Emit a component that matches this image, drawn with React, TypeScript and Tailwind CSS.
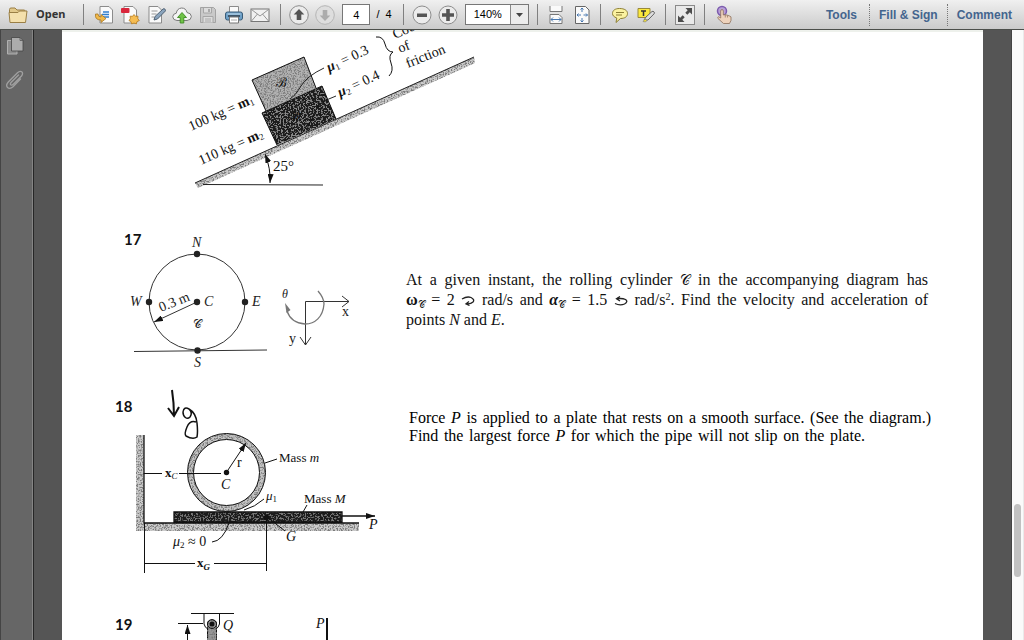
import type { ReactNode } from "react";

const serif = "font-['Liberation_Serif',serif]";

function ToolButton({ label, children }: { label: string; children: ReactNode }) {
  return (
    <button type="button" aria-label={label} className="flex h-6 w-[26px] shrink-0 items-center justify-center">
      <svg width="20" height="20" viewBox="0 0 20 20" fill="none">
        {children}
      </svg>
    </button>
  );
}

function Separator() {
  return <div className="h-[21px] w-px shrink-0 bg-[#808080]" />;
}

function Sheet({ x = 4 }: { x?: number }) {
  return (
    <path
      d={`M${x} 1.5h9l3.500 3.500v13H${x}z`}
      fill="#fafafa"
      stroke="#8b8b8b"
      strokeLinejoin="round"
    />
  );
}

function Toolbar() {
  return (
    <header className="flex h-[30px] shrink-0 items-center overflow-hidden border-b border-[#4c4f4b] bg-linear-to-b from-[#f0f0f0] to-[#cbcbcb] pr-3 pl-2 font-['Liberation_Sans',sans-serif] text-xs text-black">
      <button type="button" className="flex items-center gap-2 font-['Noto_Sans',sans-serif] text-[11px] font-bold text-[#333]">
        <svg width="20" height="18" viewBox="0 0 20 18">
          <path d="M1.500 3.500q0-1.500 1.500-1.500h4l2 2h7q1 0 1 1v3H1.500z" fill="#e2c98b" stroke="#9a7f45" />
          <path d="M2 16.500 1 6.500h9l1.500-1.500H19l-1.500 11.500z" fill="#f4e0ac" stroke="#9a7f45" strokeLinejoin="round" />
        </svg>
        Open
      </button>
      <div className="ml-[18px] flex items-center gap-[7px]">
        <Separator />
        <div className="flex">
          <ToolButton label="Convert to Word">
            <Sheet x={6} />
            <path d="M9 7h6M8 9.500h7M9 12h6" stroke="#2f7fd0" strokeWidth="1.500" />
            <path d="M1.500 9q-1 6 5.500 6v2.500l5-4-5-4v2.500q-3 0-3-3z" fill="#f0b849" stroke="#a87722" strokeWidth=".8" />
          </ToolButton>
          <ToolButton label="Create PDF">
            <Sheet />
            <rect x="1" y="3" width="8.500" height="5" rx="1" fill="#d9263c" />
            <path d="m14 9.500 1.500 1.800 2.500-.1-.2 2.500 1.500 1.900-2.300 1-.6 2.300-2.400-.8-2.400.8-.6-2.300-2-1 1.300-1.900-.2-2.500 2.500.1z" fill="#f6bd52" stroke="#b57a1d" strokeWidth=".8" />
          </ToolButton>
          <ToolButton label="Edit">
            <Sheet x={3} />
            <path d="M5.500 6h6M5.500 9h5M5.500 12h3" stroke="#999" />
            <path d="m8 15 1-3.500 8-7.500q1-.8 2 .2t.2 2L11.500 14z" fill="#8aa4bd" stroke="#47586a" strokeWidth=".9" />
          </ToolButton>
          <ToolButton label="Upload">
            <path d="M5 15.500q-4-.3-4.300-3.700.3-3.200 3.600-3.600Q5 3.500 9.500 3q4.500 0 5.500 4.500 4.200.5 4.400 4-.2 3.700-4.400 4z" fill="#f5f5f5" stroke="#7b7b7b" />
            <path d="M10 7.500 5.500 12.500h2.700v5.500h3.600v-5.500h2.700z" fill="#6fc347" stroke="#3f8a25" strokeWidth=".9" />
          </ToolButton>
          <ToolButton label="Save">
            <path d="M2.500 2.500h13l2 2v13h-15z" fill="#c9c9c9" stroke="#a3a3a3" />
            <path d="M5.500 3v5h8V3M5 17.500v-6h10v6" fill="#dcdcdc" stroke="#a6a6a6" />
            <path d="M11 4v3" stroke="#999" strokeWidth="1.500" />
            <path d="M7 14h6M7 16h6" stroke="#aaa" />
          </ToolButton>
          <ToolButton label="Print">
            <path d="M5.500 1.500h9v7h-9z" fill="#fafafa" stroke="#8b8b8b" />
            <rect x="1.500" y="7" width="17" height="8" rx="2" fill="#6d9fc6" stroke="#3a5c78" />
            <path d="M3.500 9h13" stroke="#c6dff0" />
            <path d="M4 11h12" stroke="#2e3e4c" strokeWidth="1.500" />
            <path d="M5.500 12h9v6h-9z" fill="#fff" stroke="#777" />
            <path d="M7 15h6" stroke="#aaa" />
          </ToolButton>
          <ToolButton label="Email">
            <rect x="1" y="4" width="18" height="12.500" fill="#f1f1f1" stroke="#777" />
            <path d="m1.500 4.500 8.500 6.500 8.500-6.500M1.500 16l6-7M18.500 16l-6-7" stroke="#8c8c8c" strokeWidth=".9" />
          </ToolButton>
        </div>
        <Separator />
      </div>
      <div className="ml-[5px] flex items-center">
        <ToolButton label="Previous page">
          <circle cx="10" cy="10" r="9.300" fill="#ececec" stroke="#8d8d8d" />
          <path d="m10 4-5.300 5.500h3v5.500h4.600V9.500h3z" fill="#555" />
        </ToolButton>
        <ToolButton label="Next page">
          <circle cx="10" cy="10" r="9.300" fill="#dedede" stroke="#b5b5b5" />
          <path d="M10 16 4.700 10.500h3V5h4.600v5.500h3z" fill="#acacac" />
        </ToolButton>
        <input
          aria-label="Page number"
          defaultValue="4"
          className="ml-1 h-[21px] w-7 border border-[#777] bg-white text-center text-[11px]"
        />
        <span className="ml-[6px] text-[11px] whitespace-pre">/  4</span>
      </div>
      <div className="ml-[11px] flex items-center">
        <Separator />
        <div className="ml-[5px] flex">
          <ToolButton label="Zoom out">
            <circle cx="10" cy="10" r="9" fill="#ececec" stroke="#8d8d8d" />
            <path d="M5 8.500h10v3.500H5z" fill="#555" />
          </ToolButton>
          <ToolButton label="Zoom in">
            <circle cx="10" cy="10" r="9" fill="#ececec" stroke="#8d8d8d" />
            <path d="M8.200 4h3.600v4.200H16v3.600h-4.200V16H8.200v-4.200H4V8.200h4.200z" fill="#555" />
          </ToolButton>
        </div>
        <div className="ml-1 grid h-[21px] w-16 border border-[#777] bg-white">
          <select
            aria-label="Zoom level"
            defaultValue="140%"
            className="col-start-1 row-start-1 appearance-none bg-transparent pl-2 text-[11px]"
          >
            <option>100%</option>
            <option>140%</option>
            <option>200%</option>
          </select>
          <span className="pointer-events-none col-start-1 row-start-1 flex w-[18px] items-center justify-center justify-self-end border-l border-[#888] bg-[#ececec]">
            <svg width="7" height="4" viewBox="0 0 7 4">
              <path d="M0 0h7L3.500 4z" fill="#444" />
            </svg>
          </span>
        </div>
      </div>
      <div className="ml-2 flex items-center">
        <Separator />
        <div className="ml-[5px] flex">
          <ToolButton label="Fit width">
            <path d="M4 1v5.500h12V1" fill="#fafafa" stroke="#777" />
            <path d="M4 18.500v-9h9l3 3v6z" fill="#fafafa" stroke="#777" />
            <path d="M5 14.500h10M7 12.500l-2 2 2 2M13 12.500l2 2-2 2" stroke="#4878b0" />
          </ToolButton>
          <ToolButton label="Fit page">
            <path d="M3.500 1.500h10l3.500 3.500v13.500H3.500z" fill="#fafafa" stroke="#666" />
            <path d="M10 3v4M8.500 4.500 10 3l1.500 1.500M10 17v-4M8.500 15.500 10 17l1.500-1.500M5 10h4M6.500 8.500 5 10l1.500 1.500M15.500 10h-4M14 8.500l1.500 1.500-1.500 1.500" stroke="#4878b0" />
          </ToolButton>
        </div>
        <div className="mr-[6px] ml-[5px]">
          <Separator />
        </div>
        <div className="flex">
          <ToolButton label="Comment note">
            <path d="M9.500 3.500c5 0 8 2 8 5s-2.500 5-7 5L6 17.500l.8-4.500C4 12 2.500 10.500 2.500 8.500c0-3 2.500-5 7-5z" fill="#fbf2a0" stroke="#8d7f35" />
            <path d="M6 7.500h8M6 10h6" stroke="#8d7f35" />
          </ToolButton>
          <ToolButton label="Highlight text">
            <path d="M2 3.500h12v9H2z" fill="#fbe83c" stroke="#99893a" />
            <path d="M5 6h5M7.500 6v5" stroke="#333" strokeWidth="1.500" />
            <path d="m8 15 2-3 6-5.500q1-.6 2 .4t0 2L12 15z" fill="#ddd" stroke="#666" />
            <path d="m7 16.500 2-2.500 2 1.500-1.500 1.500z" fill="#f3df3c" stroke="#777" strokeWidth=".6" />
          </ToolButton>
        </div>
        <div className="ml-[6px] flex items-center gap-[6px]">
          <Separator />
          <ToolButton label="Read mode">
            <rect x=".5" y=".5" width="19" height="19" fill="#e9e9e9" stroke="#8a8a8a" />
            <path d="M10.500 3H17v6.500l-2.200-2.200-2.500 2.400-2-2L12.700 5.200zM9.500 17H3v-6.500l2.200 2.200 2.500-2.400 2 2-2.400 2.500z" fill="#4b4b4b" />
          </ToolButton>
          <Separator />
          <ToolButton label="Touch mode">
            <circle cx="8" cy="6" r="4.500" fill="#b9a0d8" stroke="#7c5cae" strokeWidth="1.500" />
            <path d="M6.700 13V6q.1-1.500 1.300-1.500T9.300 6v4l2-.3 2 .5 2 .7 1.700 1v3.500L15.500 18.500h-6L4 13.500q-.8-1.500.6-1.800z" fill="#eed3bc" stroke="#8c6e59" strokeWidth=".8" />
            <path d="M11.300 10v2.500M13.500 10.500v2" stroke="#8c6e59" strokeWidth=".7" />
          </ToolButton>
        </div>
      </div>
      <nav className="ml-auto flex items-center font-bold whitespace-nowrap text-[#44658e]">
        <a href="#tools" className="pr-3">Tools</a>
        <a href="#sign" className="border-x border-dotted border-[#777] px-[9px] leading-[22px]">Fill &amp; Sign</a>
        <a href="#comment" className="pl-[9px]">Comment</a>
      </nav>
    </header>
  );
}

function Sidebar() {
  return (
    <aside className="flex w-[34px] shrink-0 flex-col gap-[14px] border-x border-l-[#444] border-r-[#262626] bg-[#666] pt-[6px] pl-1 shadow-[inset_-1px_0_#858585]">
      <button type="button" aria-label="Page thumbnails" className="self-start">
        <svg width="20" height="20" viewBox="0 0 20 20">
          <path d="M2.500 4.500H12v13.500H2.500z" fill="#8c8c8c" stroke="#b0b0b0" />
          <path d="M6.500 1.500h8.500l3 3v10.500H6.500z" fill="#acacac" stroke="#444" strokeWidth=".8" />
          <path d="M15 1.500v3h3" fill="none" stroke="#555" strokeWidth=".8" />
        </svg>
      </button>
      <button type="button" aria-label="Attachments" className="self-start">
        <svg width="20" height="20" viewBox="0 0 20 20" fill="none" stroke="#a0a0a0" strokeWidth="1.300" strokeLinecap="round">
          <path d="M13.500 5 6 12.500q-1.300 1.800 0 2.500 1.200.5 2.300-.8l8.200-8.200q2-2.700.2-4.200-1.900-1.200-4.200.9L3.300 12q-2.800 3.300-.8 5.500 2.500 2 5.500-.8L15.500 9" />
        </svg>
      </button>
    </aside>
  );
}

function Textures() {
  return (
    <defs>
      <filter id="light-grain" x="0" y="0" width="100%" height="100%">
        <feTurbulence type="fractalNoise" baseFrequency="0.7" numOctaves="2" seed="4" />
        <feColorMatrix values="0 0 0 0 0.200  0 0 0 0 0.200  0 0 0 0 0.200  5 0 0 0 -2.200" />
        <feComposite in2="SourceAlpha" operator="in" result="grain" />
        <feMerge>
          <feMergeNode in="SourceGraphic" />
          <feMergeNode in="grain" />
        </feMerge>
      </filter>
      <filter id="dark-grain" x="0" y="0" width="100%" height="100%">
        <feTurbulence type="fractalNoise" baseFrequency="0.6" numOctaves="2" seed="8" />
        <feColorMatrix values="0 0 0 0 0.010  0 0 0 0 0.010  0 0 0 0 0.010  8 0 0 0 -3.000" />
        <feComposite in2="SourceAlpha" operator="in" result="grain" />
        <feMerge>
          <feMergeNode in="SourceGraphic" />
          <feMergeNode in="grain" />
        </feMerge>
      </filter>
      <marker id="arrow" viewBox="0 0 9 6" refX="9" refY="3" markerWidth="9" markerHeight="6" markerUnits="userSpaceOnUse" orient="auto-start-reverse">
        <path d="M0 0 9 3 0 6z" fill="#111" />
      </marker>
    </defs>
  );
}

function InclineFigure() {
  return (
    <svg width="370" height="175" viewBox="115 30 370 175" fill="#111" fontSize="14" className={serif} role="img" aria-label="Blocks on an incline">
      <Textures />
      <path d="M195 183 474 57l1 6-277 125z" fill="#ccc" filter="url(#light-grain)" />
      <path d="m195 183 279-126M203 184.500l120 .5" stroke="#222" />
      <path d="m252 80 52-23 12 31-50 23z" fill="#b2b2b2" filter="url(#light-grain)" />
      <path d="m262 113 60-27 14 33-59 26z" fill="#888" filter="url(#dark-grain)" />
      <g fill="none" stroke="#111">
        <path d="m252 80 52-23 12 31M252 80l14 31M262 113l60-27 14 33M262 113l15 32" />
        <path d="M324 68q-17 8-23 18-6 10-11 13M336 96q-17 6-21 15-3 10-8 17" strokeWidth=".9" />
        <path d="M376 37q7-1 9 7 2 8 8 8-5 3-2 11 3 8-2 13" />
        <path d="M265 154q6 15 5 29" markerStart="url(#arrow)" markerEnd="url(#arrow)" />
      </g>
      <text x="276" y="87" fontSize="13">ℬ</text>
      <text x="290" y="120" fontSize="12">ℬ</text>
      <text transform="translate(191 131) rotate(-24)">100 kg = <tspan fontWeight="bold">m</tspan><tspan fontSize="9" dy="2">1</tspan></text>
      <text transform="translate(201 165) rotate(-24)">110 kg = <tspan fontWeight="bold">m</tspan><tspan fontSize="9" dy="2">2</tspan></text>
      <text transform="translate(329 72) rotate(-25)"><tspan fontStyle="italic" fontWeight="bold">μ</tspan><tspan fontSize="9" dy="2">1</tspan><tspan dy="-2"> = 0.3</tspan></text>
      <text transform="translate(340 97) rotate(-25)"><tspan fontStyle="italic" fontWeight="bold">μ</tspan><tspan fontSize="9" dy="2">2</tspan><tspan dy="-2"> = 0.4</tspan></text>
      <text transform="translate(395 39) rotate(-24)">Coe</text>
      <text transform="translate(400 53) rotate(-22)">of</text>
      <text transform="translate(408 68) rotate(-22)">friction</text>
      <text x="273" y="171" fontSize="15">25°</text>
    </svg>
  );
}

function CylinderFigure() {
  return (
    <svg width="260" height="145" viewBox="115 230 260 145" fill="#222" fontSize="14" className={`${serif} italic`} role="img" aria-label="Rolling cylinder">
      <g fill="none" stroke="#333">
        <circle cx="197" cy="302" r="48" />
        <path d="m134 351.500 133-1.500" />
        <path d="m197 302-43 20" markerEnd="url(#arrow)" />
        <path d="M305.500 345V301.500H349M342 296l7 5.500-7 5.500M300 337l5.500 8 5.500-8" />
        <path d="M318 291q6 7 6 13c-1 13-9 20-19 20q-14-1-18-13" stroke="#777" strokeWidth="1.300" />
      </g>
      <path d="m285 303 5.500 7-4 3z" fill="#777" />
      <circle cx="197" cy="254" r="3.200" />
      <circle cx="149" cy="302" r="3.200" />
      <circle cx="245" cy="302" r="3.200" />
      <circle cx="197" cy="302" r="3.200" />
      <circle cx="197.500" cy="350.500" r="3.200" />
      <text x="192" y="247">N</text>
      <text x="130" y="306">W</text>
      <text x="252" y="306">E</text>
      <text x="194" y="367">S</text>
      <text x="204" y="306">C</text>
      <text x="193" y="328" fontSize="12" fontStyle="normal">𝒞</text>
      <text transform="translate(161 312) rotate(-22)" fontStyle="normal">0.3 m</text>
      <text x="282" y="298" fontSize="12">θ</text>
      <text x="342" y="316" fontStyle="normal">x</text>
      <text x="289" y="343" fontStyle="normal">y</text>
    </svg>
  );
}

function PipeFigure() {
  return (
    <svg width="270" height="195" viewBox="115 385 270 195" fill="#111" fontSize="13" className={serif} role="img" aria-label="Pipe on a plate">
      <path d="M136 435h8v88h215v8H136z" fill="#ccc" filter="url(#light-grain)" />
      <path d="M174 512h168v10H174z" fill="#777" filter="url(#dark-grain)" />
      <circle cx="226.500" cy="472.500" r="39" fill="#c4c4c4" filter="url(#light-grain)" />
      <circle cx="226.500" cy="472.500" r="33" fill="#fff" />
      <g fill="none" stroke="#111">
        <circle cx="226.500" cy="472.500" r="39" />
        <circle cx="226.500" cy="472.500" r="33" />
        <path d="M144 435v88h215M174 512h168v10H174z" strokeWidth="1.300" />
        <path d="M144.500 523v50M266.500 517v54" />
        <path d="M144 473.500h18M144 563.500h51" />
        <path d="M179 473.500h42M214 563.500h52M226 473l20-30" markerEnd="url(#arrow)" />
        <path d="M342 516h33" strokeWidth="1.500" markerEnd="url(#arrow)" />
        <path d="m277 459-12 4M264 499q-9 8-20 11M307 505l-4 7M267 517l18 14M212 542q11-1 17-19" />
        <path d="M172 390q2 13 2 26m-6-8 6 8 5-9" strokeWidth="2" />
        <path d="M189 409q-5-3-6 3c0 5 4 8 7 5q3-4-1-8 7 4 8 14 1 9 0 14-4 3-11-1-2-2 1-9 3-7 9-5" strokeWidth="1.500" />
      </g>
      <circle cx="226.500" cy="472.500" r="2.700" />
      <circle cx="266.500" cy="517.500" r="2.700" />
      <text x="237" y="467" fontSize="14">r</text>
      <text x="221" y="489" fontSize="14" fontStyle="italic">C</text>
      <text x="165" y="477" fontWeight="bold">x<tspan fontSize="9" dy="2" fontWeight="normal" fontStyle="italic">C</tspan></text>
      <text x="197" y="567" fontWeight="bold">x<tspan fontSize="9" dy="3" fontStyle="italic">G</tspan></text>
      <text x="279" y="462">Mass <tspan fontStyle="italic">m</tspan></text>
      <text x="304" y="503">Mass <tspan fontStyle="italic">M</tspan></text>
      <text x="266" y="500" fontStyle="italic">μ<tspan fontSize="9" dy="2" fontStyle="normal">1</tspan></text>
      <text x="173" y="546" fontSize="14"><tspan fontStyle="italic">μ</tspan><tspan fontSize="9" dy="2">2</tspan><tspan dy="-2"> ≈ 0</tspan></text>
      <text x="286" y="541" fontSize="14" fontStyle="italic">G</text>
      <text x="369" y="529" fontSize="14" fontStyle="italic">P</text>
    </svg>
  );
}

function RodFigure() {
  return (
    <svg width="260" height="75" viewBox="115 605 260 75" fill="#111" fontSize="14" className={`${serif} italic`} role="img" aria-label="Hanging rod">
      <path d="M207.500 680v-56q0-4 4.500-4t4.500 4v56z" fill="#999" stroke="#111" filter="url(#light-grain)" />
      <g fill="none" stroke="#111">
        <path d="M191 613.500h43M178 623.500h25" />
        <path d="M187.500 680v-55" markerEnd="url(#arrow)" />
        <path d="M204 613v11q1 4 4 5M219.500 613v11q-1 4-4 5" />
        <path d="M327 618v62" strokeWidth="2" />
        <circle cx="212" cy="624" r="4.500" />
      </g>
      <circle cx="212" cy="624" r="2.500" />
      <text x="223" y="630">Q</text>
      <text x="316" y="628">P</text>
    </svg>
  );
}

function Problem({ number, numberClass, figure, children }: { number?: number; numberClass?: string; figure: ReactNode; children?: ReactNode }) {
  return (
    <section className="grid grid-cols-[291px_1fr]">
      <div className="col-start-1 row-start-1 [&>svg]:max-w-none">{figure}</div>
      {number && (
        <h2 className={`col-start-1 row-start-1 justify-self-start self-start font-['Lato',sans-serif] text-[15px] leading-[18px] font-bold ${numberClass ?? ""}`}>
          {number}
        </h2>
      )}
      {children}
    </section>
  );
}

function ScriptSub() {
  return <sub className="text-[10px] leading-none">𝒞</sub>;
}

function Page() {
  return (
    <main className="flex min-w-0 flex-1 flex-col overflow-hidden bg-white pr-[52px] pl-[53px] text-[#111] shadow-[inset_0_2px_#eef1ec]">
      <div className="flex shrink-0 flex-col">
        <Problem figure={<InclineFigure />} />
        <div className="mt-[25px]">
          <Problem number={17} numberClass="pl-[9px]" figure={<CylinderFigure />}>
            <div className={`${serif} pt-10 pr-[3px] text-base leading-5`}>
              <p className="[text-align-last:justify]">
                At a given instant, the rolling cylinder <span className="text-sm leading-none">𝒞</span> in the accompanying diagram has
              </p>
              <p className="[text-align-last:justify]">
                <b>ω</b>
                <ScriptSub /> = 2{" "}
                <svg className="inline" width="14" height="10" viewBox="0 0 14 10" fill="none" stroke="#222" strokeWidth="1.300" aria-label="clockwise">
                  <path d="M1 3q5-3 9-1.500 4 2 2 4.500-2 2-6 1.800M8 5.500l-3 2.300 3.500 1.700" />
                </svg>{" "}
                rad/s and <b><i>α</i></b>
                <ScriptSub /> = 1.5{" "}
                <svg className="inline" width="14" height="10" viewBox="0 0 14 10" fill="none" stroke="#222" strokeWidth="1.300" aria-label="counterclockwise">
                  <path d="M1 7.500q5 2.500 9.500.5 4-2.500 1-4.500-3-1.500-8.500-.8M6 .5 2.500 2.700 6 5" />
                </svg>{" "}
                rad/s<sup className="text-[10px] leading-none">2</sup>. Find the velocity and acceleration of
              </p>
              <p>
                points <i>N</i> and <i>E</i>.
              </p>
            </div>
          </Problem>
        </div>
        <div className="mt-[10px]">
          <Problem number={18} numberClass="pt-3" figure={<PipeFigure />}>
            <div className={`${serif} pt-6 pl-[3px] text-base leading-[18px] text-black`}>
              <p className="[text-align-last:justify]">
                Force <i>P</i> is applied to a plate that rests on a smooth surface. (See the diagram.)
              </p>
              <p className="max-w-[456px] [text-align-last:justify]">
                Find the largest force <i>P</i> for which the pipe will not slip on the plate.
              </p>
            </div>
          </Problem>
        </div>
        <div className="mt-[25px]">
          <Problem number={19} numberClass="pt-[10px]" figure={<RodFigure />} />
        </div>
      </div>
    </main>
  );
}

export default function App() {
  return (
    <div className="flex h-screen flex-col overflow-hidden bg-[#555]">
      <Toolbar />
      <div className="flex min-h-0 flex-1">
        <Sidebar />
        <div className="w-7 shrink-0" />
        <Page />
        <div className="w-[29px] shrink-0 border-r border-[#444]" />
        <div className="flex w-3 shrink-0 flex-col items-center border-r border-[#eaeaea] bg-[#fafafa]">
          <div className="grow-[474]" />
          <div className="h-[73px] w-[7px] rounded-full bg-[#c1c1c1]" />
          <div className="grow-[63]" />
        </div>
      </div>
    </div>
  );
}
